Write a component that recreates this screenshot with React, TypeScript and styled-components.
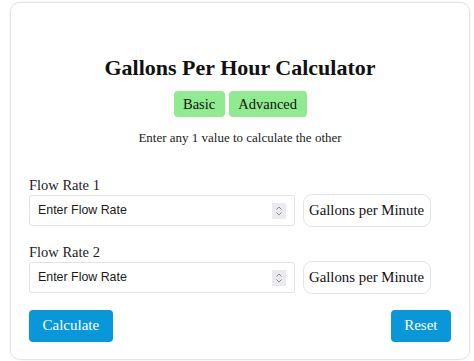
import styled, { createGlobalStyle } from "styled-components";

const GlobalStyle = createGlobalStyle`
  html, body {
    margin: 0;
    padding: 0;
    background: #ffffff;
  }
  body {
    font-family: "Liberation Serif", "Times New Roman", serif;
    color: #222;
  }
`;

const Page = styled.div`
  padding: 2px 4px 3px 10px;
`;

const Card = styled.div`
  width: 460px;
  box-sizing: border-box;
  border: 1px solid #e4e4e4;
  border-radius: 10px;
  box-shadow: 0 0 3px rgba(0, 0, 0, 0.08);
  padding: 52px 18px 17px;
  display: flex;
  flex-direction: column;
`;

const Title = styled.h2`
  margin: 0;
  font-size: 22px;
  line-height: 26px;
  font-weight: bold;
  text-align: center;
  color: #111;
`;

const ModeRow = styled.div`
  display: flex;
  justify-content: center;
  gap: 4px;
  margin-top: 10px;
`;

const ModeButton = styled.button`
  font-family: "Liberation Serif", "Times New Roman", serif;
  font-size: 14.5px;
  line-height: 18px;
  height: 26px;
  padding: 0 9.5px;
  border: none;
  border-radius: 4px;
  background: #90ea90;
  color: #111;
  cursor: pointer;
`;

const Hint = styled.p`
  margin: 12.6px 0 0;
  font-size: 13px;
  line-height: 16px;
  text-align: center;
  color: #222;
`;

const Field = styled.div<{ $first?: boolean }>`
  display: flex;
  flex-direction: column;
  margin-top: ${(p) => (p.$first ? "31px" : "17px")};
`;

const Label = styled.label`
  font-size: 14.5px;
  line-height: 17px;
  color: #222;
`;

const InputRow = styled.div`
  display: flex;
  align-items: center;
  gap: 8px;
  height: 33px;
`;

const InputWrap = styled.div`
  position: relative;
  width: 266px;
`;

const Input = styled.input`
  width: 100%;
  height: 31px;
  box-sizing: border-box;
  border: 1px solid #e2e2e2;
  border-radius: 3px;
  padding: 0 28px 0 8px;
  font-family: "Liberation Sans", Arial, sans-serif;
  font-size: 12.4px;
  color: #1a1a1a;
  outline: none;

  &::placeholder {
    color: #1a1a1a;
    opacity: 1;
  }
`;

const Spinner = styled.span`
  position: absolute;
  right: 9px;
  top: 8px;
  width: 14px;
  height: 16px;
  background: #ebebef;
  display: flex;
  align-items: center;
  justify-content: center;
`;

const UnitBox = styled.div`
  height: 33px;
  box-sizing: border-box;
  border: 1px solid #e4e4e4;
  border-radius: 9px;
  padding: 0 6px 0 5px;
  display: flex;
  align-items: center;
  font-size: 14.8px;
  color: #111;
  white-space: nowrap;
`;

const Actions = styled.div`
  display: flex;
  justify-content: space-between;
  margin-top: 16px;
`;

const ActionButton = styled.button`
  font-family: "Liberation Serif", "Times New Roman", serif;
  font-size: 15px;
  height: 32px;
  padding: 0 13.5px;
  border: none;
  border-radius: 4px;
  background: #0897d8;
  color: #fff;
  cursor: pointer;
`;

function SpinIcon() {
  return (
    <svg width="8" height="12" viewBox="0 0 8 12" fill="none">
      <path d="M1.5 4.5 L4 2 L6.5 4.5" stroke="#8a8a90" strokeWidth="1" />
      <path d="M1.5 7.5 L4 10 L6.5 7.5" stroke="#8a8a90" strokeWidth="1" />
    </svg>
  );
}

function FlowField({ label, first }: { label: string; first?: boolean }) {
  return (
    <Field $first={first}>
      <Label>{label}</Label>
      <InputRow>
        <InputWrap>
          <Input type="text" placeholder="Enter Flow Rate" />
          <Spinner>
            <SpinIcon />
          </Spinner>
        </InputWrap>
        <UnitBox>Gallons per Minute</UnitBox>
      </InputRow>
    </Field>
  );
}

export default function App() {
  return (
    <>
      <GlobalStyle />
      <Page>
        <Card>
          <Title>Gallons Per Hour Calculator</Title>
          <ModeRow>
            <ModeButton>Basic</ModeButton>
            <ModeButton>Advanced</ModeButton>
          </ModeRow>
          <Hint>Enter any 1 value to calculate the other</Hint>
          <FlowField label="Flow Rate 1" first />
          <FlowField label="Flow Rate 2" />
          <Actions>
            <ActionButton>Calculate</ActionButton>
            <ActionButton>Reset</ActionButton>
          </Actions>
        </Card>
      </Page>
    </>
  );
}
